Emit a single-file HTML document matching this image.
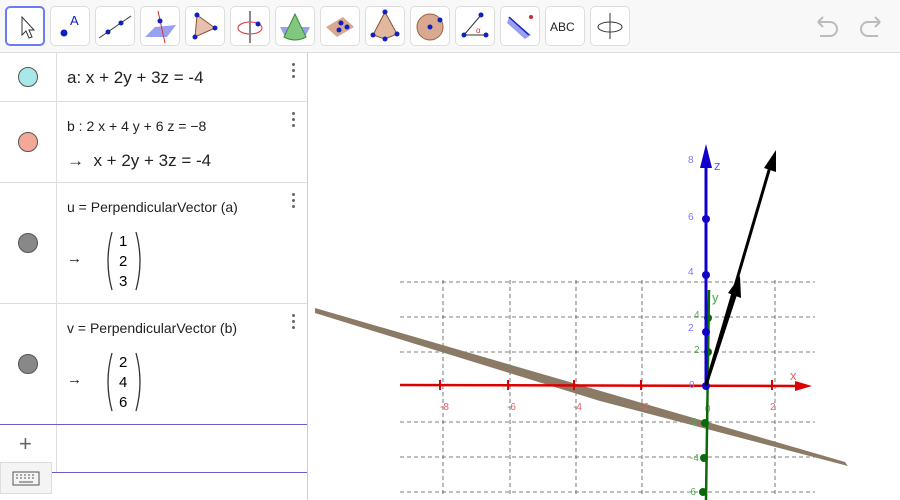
<!DOCTYPE html>
<html><head><style>
body{margin:0;width:900px;height:500px;overflow:hidden;background:#fff;font-family:"Liberation Sans",sans-serif;position:relative}
.tb{position:absolute;left:0;top:0;width:900px;height:52px;background:#f8f8f8;border-bottom:1px solid #ddd}
.ic{position:absolute;top:6px;width:38px;height:38px;border:1px solid #ddd;border-radius:5px;background:#fff}
.ic svg{width:38px;height:38px}
.lp{position:absolute;left:0;top:53px;width:307px;height:447px;border-right:1px solid #ccc;background:#fff}
.row{position:absolute;left:0;width:307px;border-bottom:1px solid #ddd}
.gut{position:absolute;left:0;top:0;bottom:0;width:56px;border-right:1px solid #ddd}
.dot{position:absolute;left:18px;width:18px;height:18px;border-radius:50%;border:1px solid #555}
.menu{position:absolute;right:12px;top:10px;width:3px}
.menu i{display:block;width:3px;height:3px;background:#666;border-radius:50%;margin-bottom:3px}
.t{position:absolute;left:67px;color:#222;white-space:nowrap}
</style></head><body>
<div class="tb">
<div class="ic" style="left:5px;border:2px solid #6a7cf5;width:36px;height:36px"><svg viewBox="0 0 38 38"><path d="M15 9 L15 27 L19 23 L22 30 L25 29 L22 22 L27 22 Z" fill="#fff" stroke="#333"/></svg></div>
<div class="ic" style="left:50px"><svg viewBox="0 0 38 38"><circle cx="13" cy="26" r="3.5" fill="#1020c0"/><text x="19" y="18" fill="#1020c0" font-size="13" font-family="Liberation Sans">A</text></svg></div>
<div class="ic" style="left:95px"><svg viewBox="0 0 38 38"><line x1="3" y1="31" x2="35" y2="9" stroke="#333"/><circle cx="12" cy="25" r="2.5" fill="#1020c0"/><circle cx="25" cy="16" r="2.5" fill="#1020c0"/></svg></div>
<div class="ic" style="left:140px"><svg viewBox="0 0 38 38"><path d="M4 30 L14 20 L35 18 L26 30Z" fill="#99a0f0"/><line x1="17" y1="4" x2="24" y2="36" stroke="#e03030"/><circle cx="19" cy="14" r="2.5" fill="#1020c0"/></svg></div>
<div class="ic" style="left:185px"><svg viewBox="0 0 38 38"><path d="M11 8 L29 21 L9 30Z" fill="#e8c0b0" stroke="#8a5030"/><circle cx="11" cy="8" r="2.5" fill="#1020c0"/><circle cx="29" cy="21" r="2.5" fill="#1020c0"/><circle cx="9" cy="30" r="2.5" fill="#1020c0"/></svg></div>
<div class="ic" style="left:230px"><svg viewBox="0 0 38 38"><ellipse cx="19" cy="21" rx="12" ry="6" fill="none" stroke="#e03030"/><line x1="19" y1="4" x2="19" y2="36" stroke="#888" stroke-width="2"/><circle cx="27" cy="17" r="2.5" fill="#1020c0"/></svg></div>
<div class="ic" style="left:275px"><svg viewBox="0 0 38 38"><path d="M4 20 L34 20 L30 28 L8 28Z" fill="#99a0f0"/><path d="M19 7 L8 30 Q19 36 30 30Z" fill="#80c880" stroke="#3a8a3a"/></svg></div>
<div class="ic" style="left:320px"><svg viewBox="0 0 38 38"><path d="M5 20 L22 10 L33 20 L16 30Z" fill="#d8a890"/><circle cx="18" cy="23" r="2.5" fill="#1020c0"/><circle cx="20" cy="16" r="2.5" fill="#1020c0"/><circle cx="26" cy="20" r="2.5" fill="#1020c0"/></svg></div>
<div class="ic" style="left:365px"><svg viewBox="0 0 38 38"><path d="M19 5 L7 28 L19 32 L31 27Z" fill="#e0b8a0" stroke="#8a5030"/><circle cx="19" cy="5" r="2.5" fill="#1020c0"/><circle cx="7" cy="28" r="2.5" fill="#1020c0"/><circle cx="19" cy="32" r="2.5" fill="#1020c0"/><circle cx="31" cy="27" r="2.5" fill="#1020c0"/></svg></div>
<div class="ic" style="left:410px"><svg viewBox="0 0 38 38"><circle cx="19" cy="20" r="13" fill="#d8a890" stroke="#a06040"/><circle cx="19" cy="20" r="2.5" fill="#1020c0"/><circle cx="29" cy="13" r="2.5" fill="#1020c0"/></svg></div>
<div class="ic" style="left:455px"><svg viewBox="0 0 38 38"><path d="M25 8 L8 28 L30 28" fill="none" stroke="#333"/><circle cx="25" cy="8" r="2.5" fill="#1020c0"/><circle cx="8" cy="28" r="2.5" fill="#1020c0"/><circle cx="30" cy="28" r="2.5" fill="#1020c0"/><text x="20" y="26" fill="#e03030" font-size="8">α</text></svg></div>
<div class="ic" style="left:500px"><svg viewBox="0 0 38 38"><path d="M8 10 L30 28 L24 32 L6 16Z" fill="#99a0f0"/><line x1="8" y1="10" x2="28" y2="28" stroke="#1020c0" stroke-width="1.5"/><circle cx="30" cy="10" r="2" fill="#c03030"/></svg></div>
<div class="ic" style="left:545px"><svg viewBox="0 0 38 38"><text x="4" y="24" font-size="12" fill="#222" font-family="Liberation Sans">ABC</text></svg></div>
<div class="ic" style="left:590px"><svg viewBox="0 0 38 38"><line x1="19" y1="6" x2="19" y2="32" stroke="#333"/><ellipse cx="19" cy="20" rx="12" ry="5" fill="none" stroke="#333"/></svg></div>
<svg style="position:absolute;left:810px;top:14px" width="80" height="26" viewBox="0 0 80 26"><path d="M8 8 H20 A7 7 0 0 1 20 22 H10 M8 8 L13 3 M8 8 L13 13" fill="none" stroke="#bbb" stroke-width="2"/><path d="M70 8 H58 A7 7 0 0 0 58 22 H68 M70 8 L65 3 M70 8 L65 13" fill="none" stroke="#bbb" stroke-width="2"/></svg>
</div>
<div class="lp">
<div class="row" style="top:0;height:48px"><div class="gut"></div><div class="dot" style="top:14px;background:#a8e8e8"></div><div class="menu"><i></i><i></i><i></i></div><div class="t" style="top:15px;font-size:17px">a: x + 2y + 3z = -4</div></div>
<div class="row" style="top:49px;height:80px"><div class="gut"></div><div class="dot" style="top:30px;background:#f4a898"></div><div class="menu"><i></i><i></i><i></i></div><div class="t" style="top:16px;font-size:14px">b : 2 x + 4 y + 6 z = −8</div><div class="t" style="top:49px;font-size:17px">→&nbsp; x + 2y + 3z = -4</div></div>
<div class="row" style="top:130px;height:120px"><div class="gut"></div><div class="dot" style="top:50px;background:#888"></div><div class="menu"><i></i><i></i><i></i></div><div class="t" style="top:16px;font-size:14px">u = PerpendicularVector (a)</div><div class="t" style="top:67px;font-size:15px">→</div><svg style="position:absolute;left:104px;top:47px" width="40" height="62"><path d="M8 2 Q0 31 8 60 M32 2 Q40 31 32 60" fill="none" stroke="#333" stroke-width="1.3"/><text x="15" y="16" font-size="15" font-family="Liberation Sans">1</text><text x="15" y="36" font-size="15" font-family="Liberation Sans">2</text><text x="15" y="56" font-size="15" font-family="Liberation Sans">3</text></svg></div>
<div class="row" style="top:251px;height:120px;border-bottom:1px solid #6a5acd"><div class="gut"></div><div class="dot" style="top:50px;background:#888"></div><div class="menu"><i></i><i></i><i></i></div><div class="t" style="top:16px;font-size:14px">v = PerpendicularVector (b)</div><div class="t" style="top:67px;font-size:15px">→</div><svg style="position:absolute;left:104px;top:47px" width="40" height="62"><path d="M8 2 Q0 31 8 60 M32 2 Q40 31 32 60" fill="none" stroke="#333" stroke-width="1.3"/><text x="15" y="16" font-size="15" font-family="Liberation Sans">2</text><text x="15" y="36" font-size="15" font-family="Liberation Sans">4</text><text x="15" y="56" font-size="15" font-family="Liberation Sans">6</text></svg></div>
<div class="row" style="top:372px;height:47px;border-bottom:1px solid #6a5acd"><div class="gut"></div><div style="position:absolute;left:19px;top:6px;font-size:22px;color:#666">+</div></div>
<div style="position:absolute;left:0;top:409px;width:50px;height:30px;background:#f4f4f4;border:1px solid #ddd"><svg width="50" height="30"><rect x="12" y="9" width="26" height="13" fill="none" stroke="#555"/><path d="M15 12h2M19 12h2M23 12h2M27 12h2M31 12h2M15 15h2M19 15h2M23 15h2M27 15h2M31 15h2M18 19h14" stroke="#555"/></svg></div>
</div>
<svg style="position:absolute;left:308px;top:53px" width="592" height="447" viewBox="308 53 592 447">
<g stroke="#555" stroke-dasharray="4 3" stroke-width="0.8" fill="none">
<path d="M400 282H815M400 317H815M400 352H815M400 422H815M400 457H815M400 492H815"/>
<path d="M443 280V497M510 280V497M576 280V497M642 280V497M775 280V497"/>
</g>
<polygon points="315,308 845,462 848,466 600,401 315,313" fill="#8a7a66"/>
<line x1="400" y1="385" x2="800" y2="386" stroke="#d00" stroke-width="2.5"/>
<polygon points="795,381 812,386 795,391" fill="#d00"/>
<g stroke="#d00" stroke-width="2"><path d="M440 380v10M508 380v10M574 380v10M641 380v10M772 380v10"/></g>
<text x="790" y="380" fill="#f06060" font-size="13">x</text>
<g fill="#f06060" font-size="10"><text x="440" y="410">-8</text><text x="507" y="410">-6</text><text x="573" y="410">-4</text><text x="640" y="410">-2</text><text x="705" y="412">0</text><text x="770" y="410">2</text></g>
<line x1="706" y1="500" x2="709" y2="290" stroke="#0a6a0a" stroke-width="2.5"/>
<g fill="#0a6a0a"><circle cx="708" cy="352" r="4"/><circle cx="708" cy="318" r="4"/><circle cx="705" cy="423" r="4"/><circle cx="704" cy="458" r="4"/><circle cx="703" cy="492" r="4"/></g>
<text x="712" y="302" fill="#4a4" font-size="13">y</text>
<g fill="#5a5" font-size="10"><text x="694" y="318">4</text><text x="694" y="353">2</text><text x="690" y="461">-4</text><text x="687" y="495">-6</text><text x="688" y="425">-2</text></g>
<line x1="706" y1="385" x2="706" y2="160" stroke="#10c" stroke-width="3"/>
<polygon points="700,168 706,144 712,168" fill="#10c"/>
<g fill="#10c"><circle cx="706" cy="219" r="4"/><circle cx="706" cy="275" r="4"/><circle cx="706" cy="332" r="4"/><circle cx="706" cy="386" r="4"/></g>
<text x="714" y="170" fill="#56f" font-size="13">z</text>
<g fill="#77f" font-size="10"><text x="688" y="163">8</text><text x="688" y="220">6</text><text x="688" y="275">4</text><text x="688" y="331">2</text><text x="689" y="388">0</text></g>
<line x1="706" y1="385" x2="772" y2="160" stroke="#000" stroke-width="3"/>
<polygon points="764,168 776,150 776,172" fill="#000"/>
<line x1="706" y1="385" x2="737" y2="290" stroke="#000" stroke-width="3"/>
<polygon points="728,293 740,276 741,298" fill="#000"/>
</svg>
</body></html>
